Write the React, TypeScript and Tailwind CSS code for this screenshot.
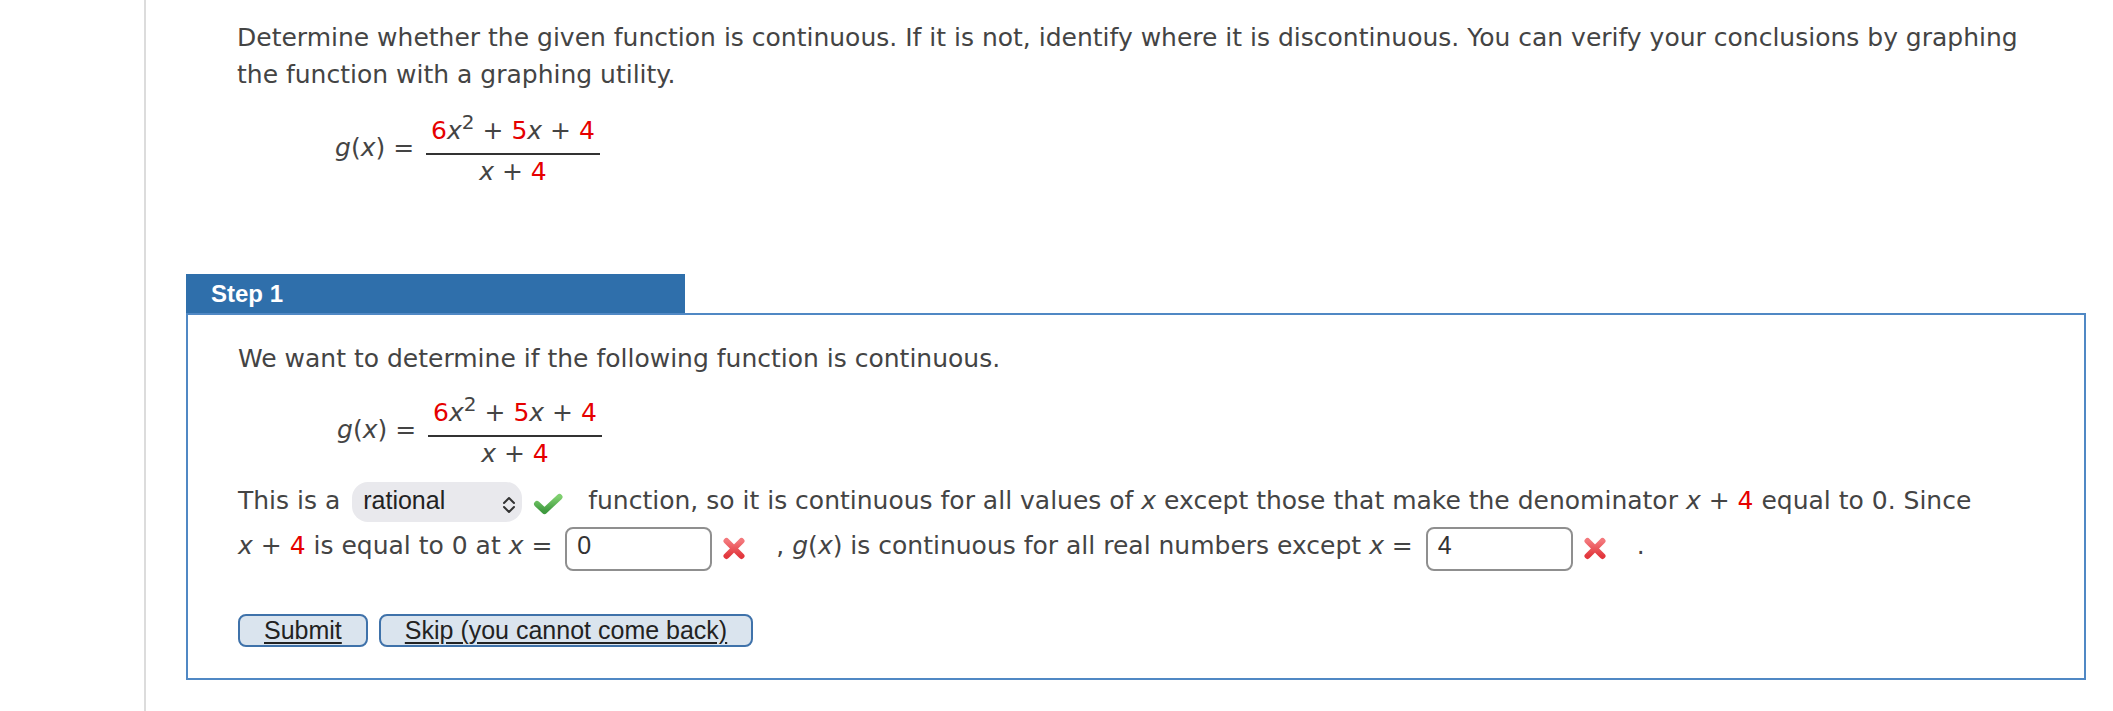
import React from 'react'

type Kids = { children: React.ReactNode }

const Red = ({ children }: Kids) => <span className="text-[#e60000]">{children}</span>
const Var = ({ children }: Kids) => <i className="italic">{children}</i>

function Fraction({ className = '' }: { className?: string }) {
  return (
    <div className={`flex items-start ${className}`}>
      <div className="mt-[17px] whitespace-nowrap leading-[30px]">
        <Var>g</Var>(<Var>x</Var>) =
      </div>
      <div className="ml-[12px] flex flex-col items-center">
        <div className="whitespace-nowrap px-[5px] pb-[7px] leading-[30px]">
          <Red>6</Red>
          <Var>x</Var>
          <sup className="text-[20px]">2</sup> + <Red>5</Red>
          <Var>x</Var> + <Red>4</Red>
        </div>
        <div className="h-[2px] w-full bg-[#333]" />
        <div className="whitespace-nowrap pt-[2px] leading-[30px]">
          <Var>x</Var> + <Red>4</Red>
        </div>
      </div>
    </div>
  )
}

function SelectBox({ value }: { value: string }) {
  return (
    <span className="ml-[4px] inline-flex h-[40px] w-[170px] items-start justify-between rounded-[16px] bg-[#e9e9ed] pl-[11px] pr-[6px] pt-[6px] align-baseline font-['Liberation_Sans',Arial,sans-serif] leading-[25px] text-[#222]">
      <span>{value}</span>
      <svg className="self-center" width="14" height="22" viewBox="0 0 14 22" fill="none" stroke="#333" strokeWidth="2" strokeLinecap="round" strokeLinejoin="round">
        <polyline points="2,9 7,4 12,9" />
        <polyline points="2,13 7,18 12,13" />
      </svg>
    </span>
  )
}

function CheckMark() {
  return (
    <svg className="ml-[11px] mr-[25px] inline-block align-[-6px]" width="30" height="22" viewBox="0 0 30 22">
      <defs>
        <linearGradient id="ok" x1="0" y1="0" x2="0" y2="1">
          <stop offset="0" stopColor="#7fcf6f" />
          <stop offset="1" stopColor="#3f9a3f" />
        </linearGradient>
      </defs>
      <path d="M4 11 L11.5 18 L26.5 4" fill="none" stroke="url(#ok)" strokeWidth="6" strokeLinecap="round" strokeLinejoin="round" />
    </svg>
  )
}

function Cross() {
  return (
    <svg className="ml-[10px] mr-[30px] inline-block align-[-6px]" width="24" height="23" viewBox="0 0 24 23">
      <defs>
        <linearGradient id="bad" x1="0" y1="0" x2="0" y2="1">
          <stop offset="0" stopColor="#f3777b" />
          <stop offset="1" stopColor="#e2373d" />
        </linearGradient>
      </defs>
      <path d="M4.5 4 L19.5 19 M19.5 4 L4.5 19" fill="none" stroke="url(#bad)" strokeWidth="6" strokeLinecap="round" />
    </svg>
  )
}

function AnswerInput({ value }: { value: string }) {
  return (
    <span className="ml-[5px] inline-flex h-[44px] w-[147px] items-start rounded-[8px] border-2 border-[#8f8f8f] bg-white pl-[10px] pt-[4px] align-baseline font-['Liberation_Sans',Arial,sans-serif] leading-[25px] text-[#333]">
      <span>{value}</span>
    </span>
  )
}

function Btn({ children }: Kids) {
  return (
    <button className="rounded-[8px] border-2 border-[#3f72aa] bg-[#dae4ee] px-[24px] font-['Liberation_Sans',Arial,sans-serif] text-[25px] leading-[29px] text-[#222] underline underline-offset-[3px]">
      {children}
    </button>
  )
}

export default function App() {
  return (
    <div className="flex h-[711px] bg-white font-['DejaVu_Sans',Verdana,sans-serif] text-[25px] text-[#444]">
      <div className="w-[144px] shrink-0" />
      <div className="w-[2px] shrink-0 bg-[#dcdcdc]" />
      <div className="flex-1 pl-[40px]">
        <div className="pt-[19px]">
          <p className="ml-[51px] whitespace-nowrap leading-[37px]">
            Determine whether the given function is continuous. If it is not, identify where it is discontinuous. You can verify your conclusions by graphing
            <br />
            the function with a graphing utility.
          </p>
          <Fraction className="mt-[23px] pl-[149px]" />
        </div>

        <div className="mt-[87px] w-[1900px]">
          <div className="flex h-[39px] w-[499px] items-center bg-[#2f6fab] pl-[25px] font-['Liberation_Sans',Arial,sans-serif] text-[24px] font-bold text-white">
            Step 1
          </div>
          <div className="border-2 border-[#5088c4] pb-[31px] pl-[50px] pt-[25px]">
            <p className="leading-[37px]">We want to determine if the following function is continuous.</p>
            <Fraction className="mt-[21px] pl-[99px]" />
            <p className="mt-[9px] whitespace-nowrap leading-[45px]">
              This is a <SelectBox value="rational" />
              <CheckMark />
              function, so it is continuous for all values of <Var>x</Var> except those that make the denominator <Var>x</Var> + <Red>4</Red> equal to 0. Since
              <br />
              <Var>x</Var> + <Red>4</Red> is equal to 0 at <Var>x</Var> = <AnswerInput value="0" />
              <Cross />, <Var>g</Var>(<Var>x</Var>) is continuous for all real numbers except <Var>x</Var> = <AnswerInput value="4" />
              <Cross />.
            </p>
            <div className="mt-[43px] flex gap-[11px]">
              <Btn>Submit</Btn>
              <Btn>Skip (you cannot come back)</Btn>
            </div>
          </div>
        </div>
      </div>
    </div>
  )
}
